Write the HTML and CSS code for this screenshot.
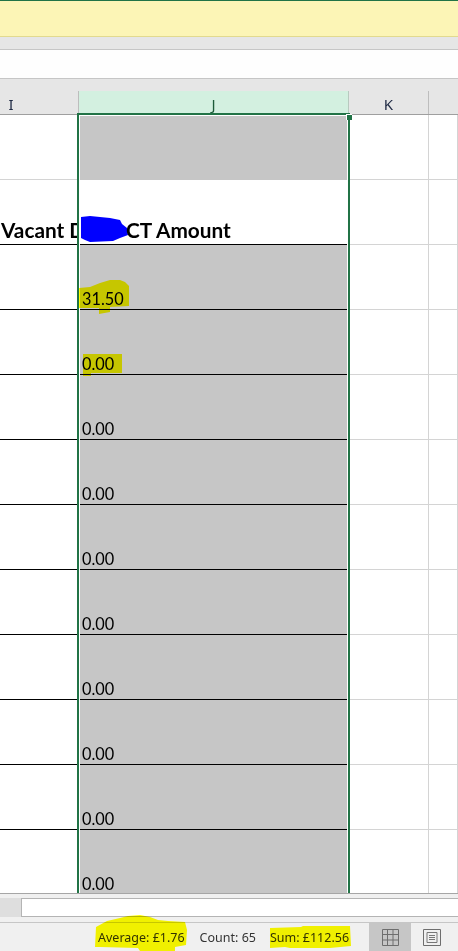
FILE: index.html
```html
<!DOCTYPE html>
<html lang="en">
<head>
<meta charset="utf-8">
<title>Spreadsheet</title>
<link rel="stylesheet" href="styles.css">
</head>
<body>
<div class="app">
  <div class="notice"></div>
  <div class="band"></div>
  <div class="formula"></div>
  <div class="colhead">
    <div class="colhead-cell first">I</div>
    <div class="colhead-cell selected">J</div>
    <div class="colhead-cell">K</div>
    <div class="colhead-cell"></div>
  </div>
  <div class="sheet">
    <div class="rows">
      <div class="row">
        <div class="cell"></div><div class="cell fill plain"></div><div class="cell"></div><div class="cell"></div>
      </div>
      <div class="row heading">
        <div class="cell ruled label">Vacant D</div><div class="cell ruled title">CT Amount</div><div class="cell"></div><div class="cell"></div>
      </div>
      <div class="row">
        <div class="cell ruled"></div><div class="cell ruled fill num">31.50</div><div class="cell"></div><div class="cell"></div>
      </div>
      <div class="row">
        <div class="cell ruled"></div><div class="cell ruled fill num">0.00</div><div class="cell"></div><div class="cell"></div>
      </div>
      <div class="row">
        <div class="cell ruled"></div><div class="cell ruled fill num">0.00</div><div class="cell"></div><div class="cell"></div>
      </div>
      <div class="row">
        <div class="cell ruled"></div><div class="cell ruled fill num">0.00</div><div class="cell"></div><div class="cell"></div>
      </div>
      <div class="row">
        <div class="cell ruled"></div><div class="cell ruled fill num">0.00</div><div class="cell"></div><div class="cell"></div>
      </div>
      <div class="row">
        <div class="cell ruled"></div><div class="cell ruled fill num">0.00</div><div class="cell"></div><div class="cell"></div>
      </div>
      <div class="row">
        <div class="cell ruled"></div><div class="cell ruled fill num">0.00</div><div class="cell"></div><div class="cell"></div>
      </div>
      <div class="row">
        <div class="cell ruled"></div><div class="cell ruled fill num">0.00</div><div class="cell"></div><div class="cell"></div>
      </div>
      <div class="row">
        <div class="cell ruled"></div><div class="cell ruled fill num">0.00</div><div class="cell"></div><div class="cell"></div>
      </div>
      <div class="row">
        <div class="cell ruled"></div><div class="cell ruled fill num">0.00</div><div class="cell"></div><div class="cell"></div>
      </div>
    </div>
    <div class="selection"><span class="handle"></span></div>
  </div>
  <div class="scrollrow">
    <div class="scroll-left"></div>
    <div class="scroll-track"></div>
  </div>
  <div class="status">
    <span class="stat stat-avg">Average: £1.76</span>
    <span class="stat stat-count">Count: 65</span>
    <span class="stat stat-sum">Sum: £112.56</span>
    <span class="view active">
      <svg width="17" height="17" viewBox="0 0 17 17" fill="none" stroke="#6e6e6e" stroke-width="1">
        <path d="M.5.5h16v16h-16zM.5 5.5h16M.5 11h16M5.5.5v16M11 .5v16"/>
      </svg>
    </span>
    <span class="view">
      <svg width="18" height="17" viewBox="0 0 18 17" fill="none" stroke="#6e6e6e" stroke-width="1">
        <path d="M.5.5h17v16h-17z"/>
        <path d="M4 3.5h10v10h-10zM6 6.5h6M6 8.5h6M6 10.5h6" stroke="#777"/>
      </svg>
    </span>
  </div>
  <svg class="marks" width="458" height="951" viewBox="0 0 458 951">
    <path class="blue" d="M81 217L90 216L110 218L120 220L122 224L127 228L128 235L120 238L113 241L90 242L85 240L81 238Z"/>
    <path class="olive" d="M79 288L90 287L100 283L110 280L120 280L125 282L129 286L129 306L110 307L110 312L99 314L99 308L79 308Z"/>
    <path class="olive" d="M83 354H122V373H91V376H83Z"/>
    <path class="marker" d="M96 927L107 921L120 918L128 916L140 915L150 917L158 920L168 921L185 922L187 930L186 945L175 947L175 951L140 951L138 948L100 947L95 947Z"/>
    <path class="marker" d="M270 928L301 927L303 926L350 926L351 946L330 948L290 948L285 947L270 948Z"/>
  </svg>
</div>
</body>
</html>
```

FILE: styles.css
```css
html, body {
  margin: 0;
  padding: 0;
  background: #fff;
}

.app {
  position: relative;
  width: 458px;
  height: 951px;
  overflow: hidden;
  display: flex;
  flex-direction: column;
  font-family: "Lato", "Liberation Sans", sans-serif;
  color: #000;
}

.notice {
  height: 35px;
  flex: none;
  background: #fcf5b6;
  border-top: 1px solid #217346;
  border-bottom: 1px solid #e2da8f;
}

.band {
  height: 12px;
  flex: none;
  background: #e6e6e6;
  border-bottom: 1px solid #c6c6c6;
}

.formula {
  height: 28px;
  flex: none;
  background: #fefefe;
  border-bottom: 1px solid #c6c6c6;
}

.colhead {
  flex: none;
  height: 36px;
  box-sizing: border-box;
  display: grid;
  grid-template-columns: 79px 270px 80px 1fr;
  align-items: end;
  background: #e6e6e6;
  border-bottom: 1px solid #9f9f9f;
}

.colhead-cell {
  height: 23px;
  box-sizing: border-box;
  border-right: 1px solid #bdbdbd;
  display: flex;
  align-items: center;
  justify-content: center;
  padding-top: 2px;
  font-family: "Noto Sans", "Liberation Sans", sans-serif;
  font-size: 15px;
  line-height: 18px;
  color: #1f2a44;
}

.colhead-cell.first {
  padding-right: 56px;
}

.colhead-cell.selected {
  background: #d3f0e0;
  color: #1c5a38;
  border-right-color: #b8c9bf;
}

.colhead-cell:last-child {
  border-right: 0;
}

.sheet {
  position: relative;
  flex: none;
  height: 778px;
  background: #fff;
}

.rows {
  height: 778px;
  overflow: hidden;
}

.row {
  display: grid;
  grid-template-columns: 79px 270px 80px 1fr;
  height: 65px;
}

.cell {
  box-sizing: border-box;
  border-right: 1px solid #d4d4d4;
  border-bottom: 1px solid #d4d4d4;
  min-width: 0;
  white-space: nowrap;
}

.cell.fill {
  background: #c6c6c6;
}

.cell.ruled {
  border-bottom: 1px solid #000;
}

.cell.plain {
  border-bottom-color: #c6c6c6;
}

.label,
.title {
  font-weight: 700;
  font-size: 20.8px;
  line-height: 24px;
  display: flex;
  align-items: flex-end;
  padding-bottom: 2px;
}

.label {
  padding-left: 1px;
}

.title {
  position: relative;
  background: #fff;
  padding-left: 47px;
}

.num {
  font-size: 16.3px;
  line-height: 20px;
  display: flex;
  align-items: flex-end;
  padding-left: 3px;
  color: #000;
}

.selection {
  position: absolute;
  left: 77px;
  top: -2px;
  bottom: 0;
  width: 269px;
  border: 2px solid #217346;
  border-bottom: 0;
  box-shadow: inset 1px 1px 0 #fff, inset -1px 0 0 #fff;
}

.handle {
  position: absolute;
  right: -4px;
  top: -1px;
  width: 5px;
  height: 5px;
  background: #217346;
  border-left: 1px solid #fff;
  border-top: 1px solid #fff;
}

.scrollrow {
  flex: none;
  height: 30px;
  box-sizing: border-box;
  display: flex;
  background: #f0f0f0;
  border-top: 1px solid #a6a6a6;
  border-bottom: 1px solid #c6c6c6;
  padding: 4px 0 5px;
}

.scroll-left {
  width: 21px;
  flex: none;
  background: #dedede;
}

.scroll-track {
  flex: 1;
  background: #fff;
  border: 1px solid #b4b4b4;
  border-right: 0;
}

.status {
  flex: 1;
  display: flex;
  align-items: center;
  background: #f0f0f0;
  font-family: "Noto Sans", "Liberation Sans", sans-serif;
  font-size: 12.5px;
  color: #333;
}

.stat-avg {
  margin-left: 98px;
}

.stat-count {
  margin-left: 15px;
}

.stat-sum {
  margin-left: 14px;
}

.view {
  align-self: stretch;
  width: 42px;
  display: flex;
  align-items: center;
  justify-content: center;
}

.view.active {
  background: #c6c6c6;
  margin-left: auto;
}

.view:last-child {
  margin-right: 5px;
}

.marks {
  position: absolute;
  left: 0;
  top: 0;
  mix-blend-mode: multiply;
  pointer-events: none;
}

.blue { fill: #0000ff; }
.olive { fill: #ffff00; }
.marker { fill: #ffff00; }
```
